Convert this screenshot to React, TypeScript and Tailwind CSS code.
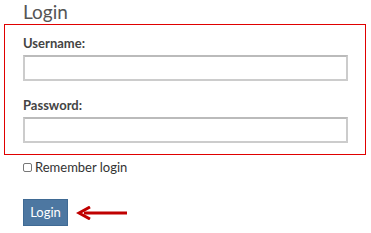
export default function App() {
  return (
    <div className="min-h-[233px] w-[371px] overflow-hidden bg-white font-['Lato',sans-serif]">
      <div className="pl-[4px]">
        <h2 className="pl-[19px] text-[19px] font-normal leading-[23px] text-[#555]">Login</h2>
        <div className="mt-[1px] w-[362px] border border-[#e00000] pb-[11px] pl-[18px] pr-[17px] pt-[10px]">
          <label className="block text-[13px] font-bold leading-[16px] text-[#444]">Username:</label>
          <input
            type="text"
            className="mt-[4px] block h-[26px] w-[325px] border-2 border-[#ccc] border-t-[#bbb] bg-white outline-none"
          />
          <label className="mt-[16px] block text-[13px] font-bold leading-[16px] text-[#444]">Password:</label>
          <input
            type="password"
            className="mt-[4px] block h-[26px] w-[325px] border-2 border-[#ccc] border-t-[#bbb] bg-white outline-none"
          />
        </div>
        <label className="mt-[4px] flex items-center gap-[3px] pl-[19px] text-[13px] leading-[16px] text-[#333]">
          <input type="checkbox" className="h-[9px] w-[9px] appearance-none rounded-[2px] border border-[#777] bg-white" />
          Remember login
        </label>
        <div className="mt-[24px] flex items-center pl-[19px]">
          <button className="h-[27px] w-[45px] border border-[#3f6a94] bg-[#4d77a1] text-[13px] text-white">Login</button>
          <svg width="52" height="14" viewBox="0 0 52 14" className="ml-[8px]">
            <path d="M51 7H8" stroke="#c00000" strokeWidth="3" />
            <path d="M14 1L3 7L14 13" stroke="#c00000" strokeWidth="3" fill="none" />
          </svg>
        </div>
      </div>
    </div>
  );
}
